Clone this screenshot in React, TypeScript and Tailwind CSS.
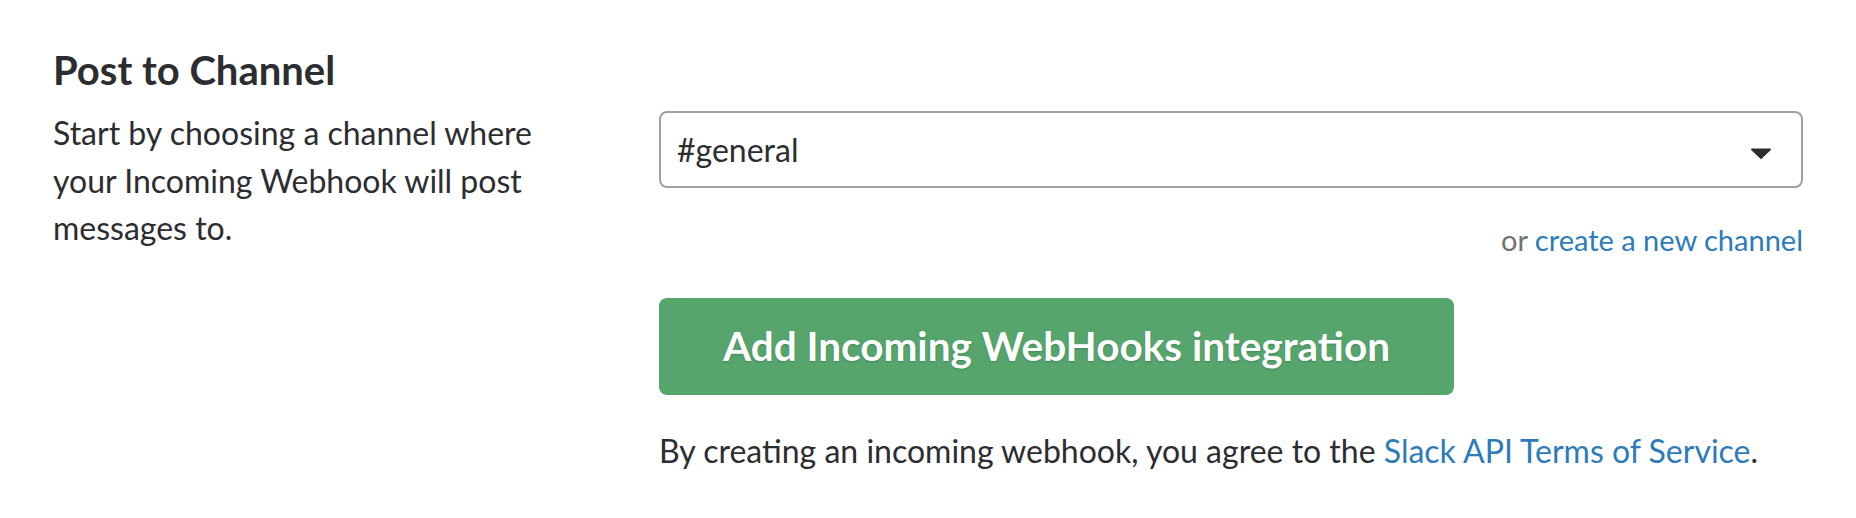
import React from "react";

export default function App() {
  return (
    <div
      className="w-[1856px] h-[518px] bg-white text-[#2c2d30] overflow-hidden"
      style={{ fontFamily: "Lato, 'Open Sans', sans-serif" }}
    >
      <div className="flex pl-[53px] pr-[53px] pt-[46px]">
        <div className="w-[606px] shrink-0 pr-[90px]">
          <h2 className="text-[40px] leading-[48px] font-bold text-[#2c2d30]">Post to Channel</h2>
          <p className="mt-[15px] text-[32px] leading-[47.5px] text-[#2c2d30]">
            Start by choosing a channel where your Incoming Webhook will post messages to.
          </p>
        </div>
        <div className="flex-1 mt-[65px] flex flex-col">
          <div className="h-[77px] rounded-[8px] border-2 border-[#a0a0a2] flex items-center justify-between pl-[16px] pr-[29px]">
            <span className="text-[32px] leading-[40px] text-[#2c2d30]">#general</span>
            <svg width="22" height="13" viewBox="0 0 22 13" className="mt-[8px]">
              <path d="M2 1.5 H20 a1 1 0 0 1 0.8 1.6 L11.8 11.6 a1 1 0 0 1 -1.6 0 L1.2 3.1 A1 1 0 0 1 2 1.5 Z" fill="#2c2d30" />
            </svg>
          </div>
          <div className="mt-[32px] text-right text-[29px] leading-[40px] text-[#717274]">
            or <a className="text-[#2d7bbb]">create a new channel</a>
          </div>
          <div className="mt-[38px]">
            <button className="w-[795px] h-[97px] rounded-[8px] bg-[#55a56d] text-white text-[40.5px] font-bold [text-shadow:0_1px_2px_rgba(0,0,0,0.2)]">
              Add Incoming WebHooks integration
            </button>
          </div>
          <p className="mt-[32px] text-[32px] leading-[47px] text-[#2c2d30]">
            By creating an incoming webhook, you agree to the{" "}
            <a className="text-[#2d7bbb]">Slack API Terms of Service</a>.
          </p>
        </div>
      </div>
    </div>
  );
}
